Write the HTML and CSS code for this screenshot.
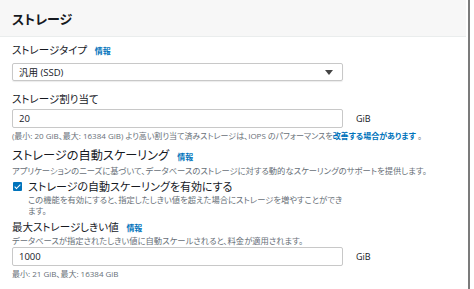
FILE: index.html
```html
<!DOCTYPE html>
<html lang="ja">
<head>
  <meta charset="UTF-8" />
  <title>ストレージ</title>
  <link rel="stylesheet" href="styles.css">
</head>
<body>
  <div class="panel">
    <div class="panel-header">
      <h2>ストレージ</h2>
    </div>

    <div class="panel-body">
      <!-- Storage type -->
      <div class="field type-field">
        <div class="label">ストレージタイプ <a class="info" href="#">情報</a></div>
        <div class="select">
          <span>汎用 (SSD)</span>
          <span class="caret"></span>
        </div>
      </div>

      <!-- Allocated storage -->
      <div class="field">
        <div class="label">ストレージ割り当て</div>
        <div class="input-row">
          <div class="input">20</div>
          <span class="unit">GiB</span>
        </div>
        <p class="hint">(最小: 20 GiB、最大: 16384 GiB) より高い割り当て済みストレージは、IOPS のパフォーマンスを<a href="#">改善する場合があります</a> 。</p>
      </div>

      <!-- Autoscaling -->
      <div class="section">
        <h3>ストレージの自動スケーリング <a class="info" href="#">情報</a></h3>
        <p class="desc">アプリケーションのニーズに基づいて、データベースのストレージに対する動的なスケーリングのサポートを提供します。</p>

        <label class="check">
          <span class="box"></span>
          <span>ストレージの自動スケーリングを有効にする</span>
        </label>
        <p class="desc check-desc">この機能を有効にすると、指定したしきい値を超えた場合にストレージを増やすことができます。</p>

        <div class="field max-field">
          <div class="label">最大ストレージしきい値 <a class="info" href="#">情報</a></div>
          <p class="desc">データベースが指定されたしきい値に自動スケールされると、料金が適用されます。</p>
          <div class="input-row">
            <div class="input">1000</div>
            <span class="unit">GiB</span>
          </div>
          <p class="hint">最小: 21 GiB、最大: 16384 GiB</p>
        </div>
      </div>
    </div>
  </div>
</body>
</html>
```

FILE: styles.css
```css
body {
  margin: 0;
  padding: 0;
  background: #fff;
  color: #16191f;
  font-family: 'Open Sans', 'Noto Sans CJK JP', sans-serif;
  font-feature-settings: "palt";
}
.panel {
  width: 468px;
  height: 289px;
  border-right: 2px solid #7b7b7b;
  overflow: hidden;
}
.panel-header {
  background: #f7f7f7;
  border-bottom: 1px solid #eaeded;
  height: 36px;
  display: flex;
  align-items: center;
  padding: 0 12px;
  margin-right: 2px;
}
.panel-header h2 {
  margin: 0;
  font-size: 13px;
  font-weight: bold;
  color: #16191f;
}
.panel-body {
  padding: 6px 12px 0;
}
.field { margin: 0; }
.type-field { margin-bottom: 11px; }
.label {
  font-size: 10.5px;
  color: #16191f;
  line-height: 14px;
  margin-bottom: 3px;
}
.type-field .label { margin-bottom: 5px; }
.info {
  font-size: 8px;
  font-weight: bold;
  color: #0073bb;
  text-decoration: none;
  margin-left: 5px;
}
.select, .input {
  width: 331px;
  height: 18px;
  box-sizing: border-box;
  border: 1px solid #c8c8c8;
  border-radius: 2px;
  font-size: 9.5px;
  padding: 0 6px;
  display: flex;
  align-items: center;
  color: #16191f;
}
.select {
  justify-content: space-between;
  box-shadow: 0 1px 1px rgba(0, 0, 0, 0.08);
}
.input { height: 19px; }
.caret {
  width: 0;
  height: 0;
  border-left: 4px solid transparent;
  border-right: 4px solid transparent;
  border-top: 5px solid #444;
  margin-right: 3px;
}
.input-row {
  display: flex;
  align-items: center;
  gap: 13px;
}
.unit {
  font-size: 9px;
  color: #16191f;
}
.hint {
  font-size: 8px;
  color: #687078;
  margin: 1.5px 0 0;
  line-height: 11px;
}
.hint a {
  color: #0073bb;
  font-weight: bold;
  text-decoration: none;
}
.section h3 {
  margin: 7px 0 0;
  font-size: 12.2px;
  font-weight: normal;
  line-height: 16px;
}
.desc {
  font-size: 8.3px;
  color: #687078;
  margin: 0;
  line-height: 11px;
}
.check {
  display: flex;
  align-items: center;
  gap: 6px;
  font-size: 11px;
  margin-top: 4px;
  line-height: 14px;
}
.box {
  width: 9px;
  height: 9px;
  background: #0073bb;
  border-radius: 1px;
  position: relative;
  margin-left: 1px;
}
.box::after {
  content: "";
  position: absolute;
  left: 3px;
  top: 1px;
  width: 2px;
  height: 5px;
  border: solid #fff;
  border-width: 0 1.5px 1.5px 0;
  transform: rotate(45deg);
}
.check-desc {
  width: 318px;
  margin: 0.5px 0 0 16px;
}
.max-field { margin-top: 4px; }
.max-field .label { margin-bottom: 0; }
.max-field .desc { margin-bottom: 1px; }
```
